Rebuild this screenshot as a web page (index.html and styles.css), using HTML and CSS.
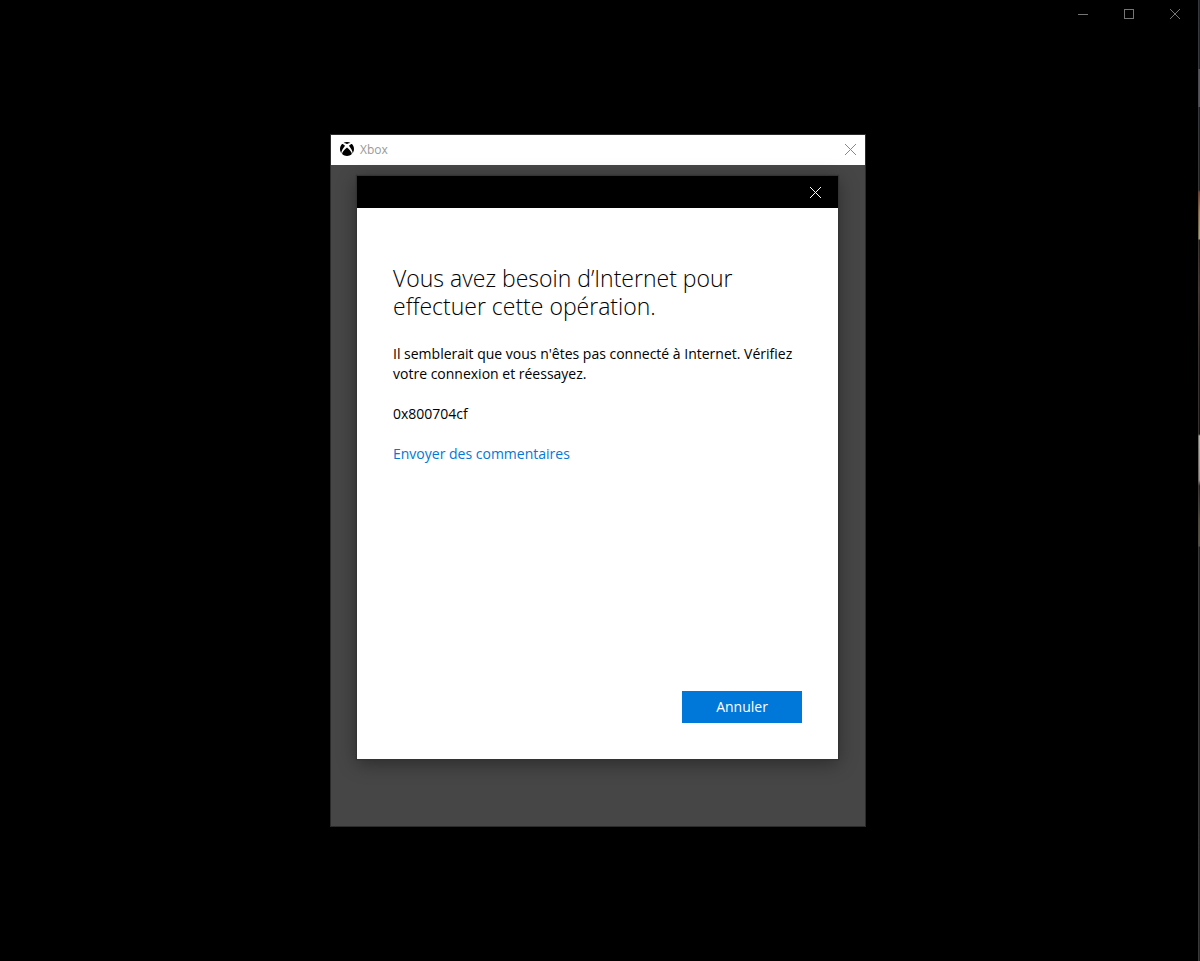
FILE: index.html
```html
<!DOCTYPE html>
<html lang="fr">

<head>
  <title>Xbox</title>
  <meta charset="UTF-8">
  <meta name="viewport" content="width=device-width, initial-scale=1.0">
  <link rel="stylesheet" href="styles.css">
</head>

<body>
  <div class="app">
    <header class="app-bar">
      <button class="caption-button" aria-label="Réduire">
        <svg width="10" height="10" viewBox="0 0 10 10" shape-rendering="crispEdges">
          <path d="M0 5.5H10" />
        </svg>
      </button>
      <button class="caption-button" aria-label="Agrandir">
        <svg width="10" height="10" viewBox="0 0 10 10" shape-rendering="crispEdges">
          <path d="M.5 .5H9.5V9.5H.5Z" />
        </svg>
      </button>
      <button class="caption-button" aria-label="Fermer">
        <svg width="10" height="10" viewBox="0 0 10 10">
          <path d="M0 0L10 10M10 0L0 10" />
        </svg>
      </button>
    </header>

    <main class="app-content">
      <section class="window">
        <header class="window-bar">
          <svg class="logo" width="14" height="14" viewBox="0 0 24 24">
            <path d="M4.102 21.033C6.211 22.881 8.977 24 12 24c3.026 0 5.789-1.119 7.902-2.967 1.877-1.912-4.316-8.709-7.902-11.417-3.582 2.708-9.779 9.505-7.898 11.417zm11.16-14.406c2.5 2.961 7.484 10.313 6.076 12.912C23.002 17.48 24 14.861 24 12.004c0-3.34-1.365-6.362-3.57-8.536 0 0-.027-.022-.082-.042-.063-.022-.152-.045-.281-.045-.592 0-1.985.434-4.805 3.246zM3.654 3.426c-.057.02-.082.041-.086.042C1.365 5.642 0 8.664 0 12.004c0 2.854.998 5.473 2.661 7.533-1.401-2.605 3.579-9.951 6.08-12.91-2.82-2.813-4.216-3.245-4.806-3.245-.131 0-.223.021-.281.046v-.002zM12 3.551S9.055 1.828 6.755 1.746c-.903-.033-1.454.295-1.521.339C7.379.646 9.659 0 11.984 0H12c2.334 0 4.605.646 6.766 2.085-.068-.046-.615-.372-1.52-.339C14.946 1.828 12 3.545 12 3.545v.006z" />
          </svg>
          <span class="window-title">Xbox</span>
          <button class="close-button" aria-label="Fermer la fenêtre">
            <svg width="12" height="12" viewBox="0 0 12 12">
              <path d="M1 1L12 12M12 1L1 12" />
            </svg>
          </button>
        </header>

        <div class="window-body">
          <div class="dialog" role="dialog" aria-labelledby="dialog-title">
            <div class="dialog-bar">
              <button class="dialog-close" aria-label="Fermer la boîte de dialogue">
                <svg width="12" height="12" viewBox="0 0 12 12">
                  <path d="M1 1L12 12M12 1L1 12" />
                </svg>
              </button>
            </div>
            <div class="dialog-content">
              <h1 id="dialog-title">Vous avez besoin d’Internet pour effectuer cette opération.</h1>
              <p>Il semblerait que vous n'êtes pas connecté à Internet. Vérifiez votre connexion et réessayez.</p>
              <p>0x800704cf</p>
              <a href="#">Envoyer des commentaires</a>
              <div class="dialog-actions">
                <button class="cancel-button">Annuler</button>
              </div>
            </div>
          </div>
        </div>
      </section>
    </main>
  </div>
  <div class="desktop-edge"></div>
</body>

</html>
```
FILE: styles.css
```css
* {
  box-sizing: border-box;
}

body {
  display: flex;
  min-height: 100vh;
  margin: 0;
  background-color: #000;
  font-family: 'Segoe UI', 'Open Sans', 'Noto Sans', sans-serif;
}

button {
  display: flex;
  align-items: center;
  justify-content: center;
  padding: 0;
  border: none;
  background: none;
  font-family: inherit;
}

button svg {
  fill: none;
  stroke: currentColor;
}

.app {
  flex: 1;
  display: flex;
  flex-direction: column;
}

.app-bar {
  display: flex;
  justify-content: flex-end;
  height: 28px;
}

.caption-button {
  width: 46px;
  color: #757575;
}

.app-content {
  flex: 1;
  display: flex;
  align-items: center;
  justify-content: center;
  padding: 0 2px 28px 0;
}

.window {
  width: 100%;
  max-width: 536px;
  border: 1px solid #2b2b2b;
  background-color: #464646;
}

.window-bar {
  display: flex;
  align-items: center;
  height: 30px;
  padding: 0 0 2px 9px;
  background-color: #fff;
}

.window-title {
  flex: 1;
  margin-left: 6px;
  font-size: 12px;
  color: #999;
}

.close-button {
  width: 30px;
  height: 28px;
  color: #888;
}

.window-body {
  padding: 11px 27px 67px 26px;
}

.dialog {
  background-color: #fff;
  box-shadow: 0 0 1px 1px #333, 0 4px 18px rgba(0, 0, 0, 0.4);
}

.dialog-bar {
  display: flex;
  justify-content: flex-end;
  height: 32px;
  background-color: #000;
}

.dialog-close {
  width: 46px;
  color: #fff;
}

.dialog-content {
  display: flex;
  flex-direction: column;
  align-items: flex-start;
  min-height: 551px;
  padding: 56px 36px 36px;
  font-size: 14px;
  line-height: 20px;
  color: #000;
}

.dialog-content h1 {
  margin: 0 0 24px;
  font-size: 23px;
  font-weight: 300;
  line-height: 28px;
}

.dialog-content p {
  margin: 0 0 20px;
}

.dialog-content a {
  color: #0078d7;
  text-decoration: none;
}

.dialog-actions {
  display: flex;
  align-self: flex-end;
  margin-top: auto;
}

.cancel-button {
  width: 120px;
  height: 32px;
  padding-bottom: 2px;
  background-color: #0078d9;
  font-size: 14px;
  color: #fff;
}

/* sliver of the desktop behind the app */
.desktop-edge {
  width: 2px;
  border-left: 1px solid rgba(70, 70, 70, 0.6);
  background: linear-gradient(#1c2733 0, #20242c 69px, #55555f 69px, #55555f 107px, #20222a 107px, #221f1f 190px, #a03010 192px, #c08030 212px, #b0a860 239px, #2a1a12 240px, #4a2c20 290px, #2a1510 350px, #1c1010 434px, #b5b5a5 436px, #a89890 480px, #302020 486px, #403c30 510px, #55502c 520px, #5c5444 546px, #242424 547px, #262626);
}
```
